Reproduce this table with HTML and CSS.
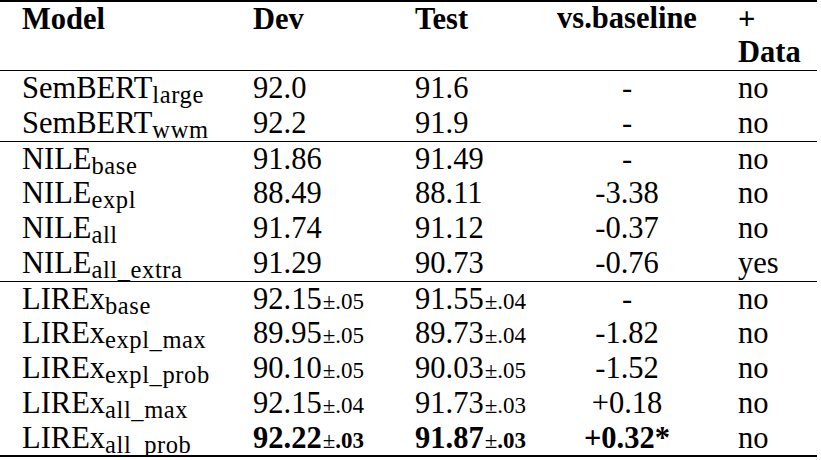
FILE: index.html
```html
<!DOCTYPE html>
<html lang="en">
<head>
<meta charset="utf-8">
<title>Results table</title>
<link rel="stylesheet" href="styles.css">
</head>
<body>
<table class="results">
  <colgroup>
    <col class="c-model">
    <col class="c-dev">
    <col class="c-test">
    <col class="c-vs">
    <col class="c-data">
  </colgroup>
  <thead>
    <tr class="head">
      <th>Model</th>
      <th>Dev</th>
      <th>Test</th>
      <th class="ctr">vs.baseline</th>
      <th><span class="wrap">+ Data</span></th>
    </tr>
  </thead>
  <tbody class="grp first">
    <tr><td class="name">SemBERT<sub>large</sub></td><td>92.0</td><td>91.6</td><td class="ctr">-</td><td>no</td></tr>
    <tr><td class="name">SemBERT<sub>wwm</sub></td><td>92.2</td><td>91.9</td><td class="ctr">-</td><td>no</td></tr>
  </tbody>
  <tbody class="grp">
    <tr><td class="name">NILE<sub>base</sub></td><td>91.86</td><td>91.49</td><td class="ctr">-</td><td>no</td></tr>
    <tr><td class="name">NILE<sub>expl</sub></td><td>88.49</td><td>88.11</td><td class="ctr">-3.38</td><td>no</td></tr>
    <tr><td class="name">NILE<sub>all</sub></td><td>91.74</td><td>91.12</td><td class="ctr">-0.37</td><td>no</td></tr>
    <tr><td class="name">NILE<sub>all_extra</sub></td><td>91.29</td><td>90.73</td><td class="ctr">-0.76</td><td>yes</td></tr>
  </tbody>
  <tbody class="grp last">
    <tr><td class="name">LIREx<sub>base</sub></td><td>92.15<span class="pm">±.05</span></td><td>91.55<span class="pm">±.04</span></td><td class="ctr">-</td><td>no</td></tr>
    <tr><td class="name">LIREx<sub>expl_max</sub></td><td>89.95<span class="pm">±.05</span></td><td>89.73<span class="pm">±.04</span></td><td class="ctr">-1.82</td><td>no</td></tr>
    <tr><td class="name">LIREx<sub>expl_prob</sub></td><td>90.10<span class="pm">±.05</span></td><td>90.03<span class="pm">±.05</span></td><td class="ctr">-1.52</td><td>no</td></tr>
    <tr><td class="name">LIREx<sub>all_max</sub></td><td>92.15<span class="pm">±.04</span></td><td>91.73<span class="pm">±.03</span></td><td class="ctr">+0.18</td><td>no</td></tr>
    <tr><td class="name">LIREx<sub>all_prob</sub></td><td><b>92.22</b><span class="pm">±<b>.03</b></span></td><td><b>91.87</b><span class="pm">±<b>.03</b></span></td><td class="ctr"><b>+0.32*</b></td><td>no</td></tr>
  </tbody>
</table>
</body>
</html>
```

FILE: styles.css
```css
html, body {
  margin: 0;
  padding: 0;
  background: #ffffff;
}

body {
  font-family: "Liberation Serif", Tinos, Times, serif;
  font-size: 30.5px;
  color: #000000;
}

.results {
  width: 817px;
  table-layout: fixed;
  border-collapse: separate;
  border-spacing: 0;
}

.c-model { width: 231px; }
.c-dev { width: 162px; }
.c-test { width: 145px; }
.c-vs { width: 178px; }
.c-data { width: 101px; }

.results th,
.results td {
  padding: 0 0 0 22px;
  text-align: left;
  vertical-align: middle;
  white-space: nowrap;
  box-sizing: border-box;
}

.results th.ctr,
.results td.ctr {
  padding: 0;
  text-align: center;
}

.head th {
  font-weight: bold;
  vertical-align: top;
  line-height: 33px;
  height: 71px;
  padding-top: 1px;
  border-top: 2px solid #000;
  border-bottom: 1px solid #000;
}

.head .wrap {
  display: inline-block;
  width: 70px;
  white-space: normal;
}

.results td {
  height: 35px;
  line-height: 35px;
}

.grp:not(.first) tr:first-child td {
  border-top: 1px solid #000;
  line-height: 34px;
}

.grp.last tr:last-child td {
  border-bottom: 2px solid #000;
  height: 36px;
  line-height: 34px;
}

.results sub {
  font-size: 24.5px;
  letter-spacing: 0.6px;
  line-height: 0;
  vertical-align: -5px;
}

.pm {
  font-size: 23px;
  line-height: 0;
  margin-left: 1px;
}
```
